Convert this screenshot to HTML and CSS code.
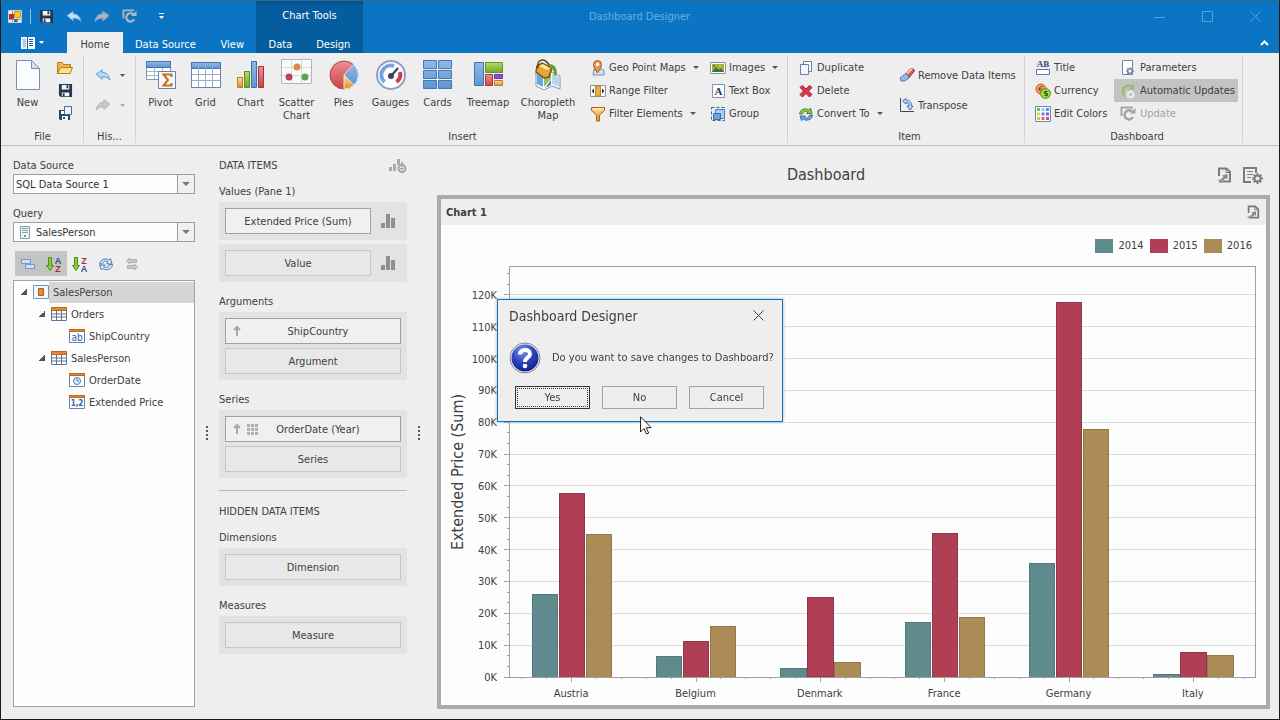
FILE: index.html
```html
<!DOCTYPE html>
<html lang="en">
<head>
<meta charset="utf-8">
<title>Dashboard Designer</title>
<link rel="stylesheet" href="styles.css">
</head>
<body>
<svg class="defs" aria-hidden="true">
  <defs>
    <linearGradient id="gBlue" x1="0" y1="0" x2="0" y2="1"><stop offset="0" stop-color="#8fb9e6"/><stop offset="1" stop-color="#5f95d2"/></linearGradient>
    <linearGradient id="gRed" x1="0" y1="0" x2="0" y2="1"><stop offset="0" stop-color="#ee9090"/><stop offset="1" stop-color="#c8444b"/></linearGradient>
    <linearGradient id="gGreen" x1="0" y1="0" x2="0" y2="1"><stop offset="0" stop-color="#b5dc62"/><stop offset="1" stop-color="#6fa52a"/></linearGradient>
    <linearGradient id="gGold" x1="0" y1="0" x2="0" y2="1"><stop offset="0" stop-color="#ffe09a"/><stop offset="1" stop-color="#d98f26"/></linearGradient>
    <radialGradient id="gBall" cx=".4" cy=".25" r=".8"><stop offset="0" stop-color="#7f95f0"/><stop offset=".5" stop-color="#2c45c4"/><stop offset="1" stop-color="#131f80"/></radialGradient>
    <symbol id="i-disk" viewBox="0 0 16 16"><path fill="#26364f" d="M1 1h14v14H3l-2-2z"/><path fill="#f4f7fb" d="M4 2h8v5H4zM4 10h8v4H4z"/><path fill="#26364f" d="M9 2.500h2v3H9zM5 11h2v3H5z"/></symbol>
    <symbol id="i-table" viewBox="0 0 16 14"><path fill="#fff" stroke="#5c7599" d="M.5.500h15v13H.5z"/><path fill="#e08a33" stroke="#b9681c" d="M.5.500h15v3H.5z"/><path stroke="#5c7599" fill="none" d="M1 7h14M1 10h14M5.500 4v9M10.500 4v9"/></symbol>
    <symbol id="i-field" viewBox="0 0 16 14"><path fill="#fff" stroke="#5c86b5" d="M.5.500h15v13H.5z"/><path fill="#e08a33" stroke="#b9681c" d="M.5.500h15v2H.5z"/></symbol>
    <symbol id="i-bars" viewBox="0 0 16 16"><path fill="#8f8f8f" d="M1 10h4v5H1zM6 1h4v14H6zM11 5h4v10h-4z"/></symbol>
    <symbol id="i-export" viewBox="0 0 16 16"><path fill="none" stroke="#7c7c7c" stroke-width="2" d="M3 9V1.500h7.500L14 5v9.500H3"/><path fill="none" stroke="#7c7c7c" d="M10 1v4.500h4"/><path fill="#8b8b8b" d="M0 13c4 0 6-1 7.500-3L6 8.500 11.500 7v5.500L10 11c-2 2.500-5 3-10 2z"/></symbol>
    <symbol id="i-gear" viewBox="0 0 12 12"><circle cx="6" cy="6" r="3.300" fill="none" stroke="currentColor" stroke-width="2"/><path stroke="currentColor" stroke-width="2" d="M6 0v2.500M6 9.500V12M0 6h2.500M9.500 6H12M1.800 1.800l1.700 1.700M8.500 8.500l1.700 1.700M1.800 10.200l1.700-1.700M8.500 3.500l1.700-1.700"/></symbol>
    <symbol id="i-undo" viewBox="0 0 18 14"><path fill="currentColor" stroke="var(--edge)" d="M1 6l7-5v3c5 0 8 3 9 9-2-3-5-4-9-4v3z"/></symbol>
    <symbol id="i-refresh" viewBox="0 0 16 16"><path fill="none" stroke="currentColor" stroke-width="2" d="M1.500 10V1.500H13"/><path fill="none" stroke="currentColor" stroke-width="2.500" d="M12.500 6A4.500 4.500 0 1 0 13 11"/><path fill="currentColor" d="M9.500 7.500h6V2z"/></symbol>
  </defs>
</svg>

<header class="header">
  <div class="header-left">
    <div class="quick">
      <svg width="14" height="13" viewBox="0 0 14 13"><path fill="#f3f3ee" stroke="#c9cdd6" d="M.5.500h13v12H.5z"/><path stroke="#8897b4" d="M1 9.500h12M4.500 1v11M9.500 1v11"/><path fill="#c4242c" d="M1 4h5v5H1z"/><path fill="#f7c832" stroke="#cf9718" d="M6.500 1.500h6v6h-6z"/><path fill="#2d5fc0" d="M6 9h3v3H6z"/></svg>
      <span class="quick-sep"></span>
      <button aria-label="Save"><svg width="15" height="15"><use href="#i-disk"/></svg></button>
      <button aria-label="Undo" class="undo-light"><svg width="16" height="13"><use href="#i-undo"/></svg></button>
      <button aria-label="Redo" class="redo-gray"><svg class="flip" width="16" height="13"><use href="#i-undo"/></svg></button>
      <button aria-label="Refresh" class="refresh-gray"><svg width="15" height="15"><use href="#i-refresh"/></svg></button>
      <button aria-label="Customize toolbar" class="quick-more"><svg width="7" height="7" viewBox="0 0 7 7"><path fill="#fff" d="M1 0h5v1H1zM1 3h5L3.500 6z"/></svg></button>
    </div>
    <nav class="tabs">
      <button class="app-btn" aria-label="File menu"><svg width="14" height="12" viewBox="0 0 14 12"><path fill="#fff" d="M0 0h14v12H0z"/><path fill="#1470bd" d="M1.500 1.500H5v9H1.500z" opacity=".35"/><path stroke="#145a96" d="M6.500 0v12M8 2.500h4M8 4.500h4M8 6.500h4M8 8.500h4"/></svg><svg width="5" height="3" viewBox="0 0 5 3"><path fill="#fff" d="M0 0h5L2.500 3z"/></svg></button>
      <button class="tab tab-active">Home</button>
      <button class="tab">Data Source</button>
      <button class="tab">View</button>
    </nav>
  </div>
  <div class="context">
    <span class="context-title">Chart Tools</span>
    <div class="context-tabs"><button class="tab">Data</button><button class="tab">Design</button></div>
  </div>
  <div class="header-right">
    <div class="title-row">
      <span class="app-title">Dashboard Designer</span>
      <div class="window-btns">
        <button aria-label="Minimize"><svg width="11" height="11" viewBox="0 0 11 11"><path stroke="#3fa9e8" d="M0 6.500h11"/></svg></button>
        <button aria-label="Maximize"><svg width="11" height="11" viewBox="0 0 11 11"><path fill="none" stroke="#3fa9e8" d="M.5.500h10v10H.5z"/></svg></button>
        <button aria-label="Close"><svg width="11" height="11" viewBox="0 0 11 11"><path stroke="#3fa9e8" d="M.5.500l10 10M10.500.500l-10 10"/></svg></button>
      </div>
    </div>
    <button class="collapse" aria-label="Collapse ribbon"><svg width="9" height="6" viewBox="0 0 9 6"><path fill="none" stroke="#fff" stroke-width="2" d="M1 5l3.500-3.500L8 5"/></svg></button>
  </div>
</header>

<section class="ribbon">
  <div class="group group-file">
    <div class="group-body">
      <button class="big"><svg width="32" height="32" viewBox="0 0 32 32"><path fill="#fcfdff" stroke="#7d8db0" d="M4.500 1.500h15l8 8v21h-23z"/><path fill="#d9e2f2" stroke="#7d8db0" d="M19.500 1.500v8h8z"/></svg><span>New</span></button>
      <div class="icon-col">
        <button aria-label="Open"><svg width="16" height="14" viewBox="0 0 16 14"><path fill="#f0b84c" stroke="#b9791f" d="M.5 12.500v-11h5l1 2h7v3"/><path fill="#ffdf94" stroke="#b9791f" d="M.5 12.500l3-6h12l-2.500 6z"/></svg></button>
        <button aria-label="Save"><svg width="15" height="15"><use href="#i-disk"/></svg></button>
        <button aria-label="Save as"><svg width="15" height="15" viewBox="0 0 15 15"><path fill="#26486d" d="M1 4h11v10H2l-1-1z"/><path fill="#fff" d="M3 5h4v3H3zM4 10h6v4H4z"/><path fill="#26486d" d="M5 11h2v2H5z"/><path fill="#eef3fb" stroke="#4d6790" d="M6.500.500h7v8h-7z"/></svg></button>
      </div>
    </div>
    <span class="caption">File</span>
  </div>
  <div class="group group-history">
    <div class="group-body">
      <button class="split undo-blue" aria-label="Undo"><svg width="16" height="12"><use href="#i-undo"/></svg><svg width="5" height="3" viewBox="0 0 5 3"><path fill="#555" d="M0 0h5L2.500 3z"/></svg></button>
      <button class="split redo-off" aria-label="Redo" disabled><svg class="flip" width="16" height="12"><use href="#i-undo"/></svg><svg width="5" height="3" viewBox="0 0 5 3"><path fill="#aaa" d="M0 0h5L2.500 3z"/></svg></button>
    </div>
    <span class="caption">His...</span>
  </div>
  <div class="group group-insert">
    <div class="group-body">
      <button class="big big-narrow"><svg width="32" height="32" viewBox="0 0 32 32"><path fill="#fff" stroke="#8294bc" d="M1.500 2.500h24v18h-24z"/><path fill="url(#gBlue)" stroke="#3f74b5" d="M1.500 2.500h24v6h-24z"/><path fill="none" stroke="#a9b7d3" d="M2 12.500h23M2 16.500h23M9.500 9v11M17.500 9v11"/><path fill="#f7f9fe" stroke="#6c7fad" d="M13.500 12.500h17v17h-17z"/><path fill="none" stroke="#c8701c" stroke-width="2" d="M26.500 18v-2.500h-8l4.500 5.500-4.500 5.500h8V24"/></svg><span>Pivot</span></button>
      <button class="big big-narrow"><svg width="32" height="32" viewBox="0 0 32 32"><path fill="#fff" stroke="#6f83b3" d="M1.500 3.500h29v25h-29z"/><path fill="url(#gBlue)" stroke="#3f74b5" d="M1.500 3.500h29v6h-29z"/><path fill="none" stroke="#9aaad0" d="M2 15.500h28M2 21.500h28M8.500 4v24M15.500 4v24M22.500 4v24"/></svg><span>Grid</span></button>
      <button class="big big-narrow"><svg width="32" height="32" viewBox="0 0 32 32"><path fill="url(#gGold)" stroke="#b87b25" d="M2.500 18.500h5v10h-5z"/><path fill="url(#gGreen)" stroke="#5c8c22" d="M9.500 12.500h5v16h-5z"/><path fill="url(#gBlue)" stroke="#3d6fae" d="M16.500 2.500h5v26h-5z"/><path fill="url(#gRed)" stroke="#a8303a" d="M23.500 7.500h5v21h-5z"/></svg><span>Chart</span></button>
      <button class="big"><svg width="32" height="32" viewBox="0 0 32 32"><path fill="#fafafa" stroke="#b4b4b4" d="M.5.500h30v24H.5z"/><path stroke="#dadada" d="M1 8.500h29M1 16.500h29M10.500 1v23M20.500 1v23"/><circle cx="16" cy="8" r="3.500" fill="#d98b47"/><circle cx="8" cy="18" r="3.500" fill="#c23f5b"/><circle cx="24" cy="18" r="3.500" fill="#62a052"/></svg><span>Scatter<br>Chart</span></button>
      <button class="big"><svg width="32" height="32" viewBox="0 0 32 32"><circle cx="16" cy="16" r="14" fill="url(#gRed)" stroke="#a54650"/><path fill="url(#gBlue)" stroke="#dce8f5" d="M16 16l9.500-10.500A14 14 0 0 1 26 26z"/><path fill="url(#gGold)" stroke="#f4e2bd" d="M16 16l10 10a14 14 0 0 1-10 4z"/></svg><span>Pies</span></button>
      <button class="big"><svg width="32" height="32" viewBox="0 0 32 32"><circle cx="16" cy="16" r="14" fill="#fdfdff" stroke="#8f9cc4" stroke-width="2"/><path fill="none" stroke="#75a5dc" stroke-width="4" d="M9.500 23A9.500 9.500 0 0 1 19 7"/><path fill="none" stroke="#c9404a" stroke-width="4" d="M25 13a9.500 9.500 0 0 1-3.500 10"/><path stroke="#3a4558" stroke-width="2" d="M16 17l7-8"/><circle cx="16" cy="17" r="3" fill="#3a4558"/></svg><span>Gauges</span></button>
      <button class="big"><svg width="32" height="32" viewBox="0 0 32 32"><path fill="url(#gBlue)" stroke="#4777b3" d="M1.500 1.500h13v8h-13zM16.500 1.500h13v8h-13zM1.500 11.500h13v8h-13zM16.500 11.500h13v8h-13zM1.500 21.500h13v8h-13zM16.500 21.500h13v8h-13z"/></svg><span>Cards</span></button>
      <button class="big big-wide"><svg width="32" height="32" viewBox="0 0 32 32"><path fill="url(#gBlue)" stroke="#4472ad" d="M2.500 3.500h9v23h-9z"/><path fill="url(#gGreen)" stroke="#639530" d="M13.500 3.500h17v10h-17z"/><path fill="url(#gRed)" stroke="#a83a3a" d="M13.500 15.500h7v11h-7z"/><path fill="#8e50d0" stroke="#7038ad" d="M22.500 15.500h8v4h-8z"/><path fill="url(#gGold)" stroke="#b87a2a" d="M22.500 21.500h8v5h-8z"/></svg><span>Treemap</span></button>
      <button class="big big-xwide"><svg width="32" height="32" viewBox="0 0 32 32"><path fill="#fff" stroke="#8894a8" d="M4 13l7 4 8-4 9 4v13l-8-3-8 4-8-4z"/><path fill="#6aa8dc" d="M5 14l6 4v10l-6-3z"/><path fill="#8fc25c" d="M12 18l7-4v6l-7 8z"/><path fill="#4f84c7" d="M13 29l6-8v5z"/><path fill="#b9d7ef" d="M20 15l7 3v10l-7-3z"/><path fill="#e6a53c" stroke="#7e5117" stroke-width="1.500" d="M5 7l5-3 10 5-3 9-5 1-8-6z"/><path fill="#ffe09a" d="M7 7l4-2 7 4-3 2z"/><path fill="none" stroke="#5a4325" stroke-width="1.500" d="M6 9C5 2 8 1 11 1s6 4 9 9"/><path fill="#63a22c" d="M17 5c6 0 8 4 8 11l-3 1c0-6-1-7-4-8z"/></svg><span>Choropleth<br>Map</span></button>
      <div class="small-col small-col-a">
        <button class="small"><svg width="16" height="16" viewBox="0 0 16 16"><path fill="#cfe0f4" stroke="#7393c0" d="M4 9l3 2 4-2 3 1v5H3z"/><path fill="#e9964a" stroke="#a45b1b" d="M7.500 13C5 9 3.500 7.500 3.500 4.500a4 4 0 0 1 8 0c0 3-1.500 4.500-4 8.500z"/><circle cx="7.500" cy="4.500" r="1.800" fill="#fff"/></svg>Geo Point Maps<i class="caret"></i></button>
        <button class="small"><svg width="16" height="16" viewBox="0 0 16 16"><path fill="#fff" stroke="#8a93a3" d="M.5 2.500h15v11H.5z"/><path fill="#e2b14d" stroke="#b68528" d="M5.500 3v10h5V3z"/><path fill="#333" d="M4 5.500v5L1.500 8zM12 5.500v5L14.500 8z"/></svg>Range Filter</button>
        <button class="small"><svg width="16" height="16" viewBox="0 0 16 16"><path fill="url(#gGold)" stroke="#a4661d" d="M1.500 1.500h13v3L9.500 9v6h-3V9l-5-4.500z"/><path fill="#fff3cf" d="M3 2.500h10v1H3z"/></svg>Filter Elements<i class="caret"></i></button>
      </div>
      <div class="small-col small-col-b">
        <button class="small"><svg width="16" height="16" viewBox="0 0 16 16"><path fill="#fff" stroke="#8a93a3" d="M.5 2.500h15v11H.5z"/><path fill="#8dbb3e" d="M2 4h12v8H2z"/><path fill="#3f7430" d="M2 12l4-5 3 3 2-2 3 4z"/><circle cx="10" cy="6" r="1.800" fill="#f2a32f"/><path fill="#c94536" d="M3 5h2v2H3z"/></svg>Images<i class="caret"></i></button>
        <button class="small"><svg width="16" height="16" viewBox="0 0 16 16"><path fill="#fff" stroke="#8090b0" d="M2.500 1.500h12v13h-12z"/><text x="8.500" y="12" class="serif-a" text-anchor="middle">A</text></svg>Text Box</button>
        <button class="small"><svg width="16" height="16" viewBox="0 0 16 16"><path fill="none" stroke="#3c5f8f" stroke-dasharray="3 2" d="M1.500 1.500h13v13h-13z"/><path fill="#a9cdf0" stroke="#4b82bf" d="M5.500 3.500h9v9h-9z"/><path fill="#6aa4dc" stroke="#3d72ae" d="M3.500 7.500h7v6h-7z"/></svg>Group</button>
      </div>
    </div>
    <span class="caption">Insert</span>
  </div>
  <div class="group group-item">
    <div class="group-body">
      <div class="small-col small-col-c">
        <button class="small"><svg width="16" height="16" viewBox="0 0 16 16"><path fill="#fff" stroke="#6a7ea8" d="M5.500 1.500h8v10h-8z"/><path fill="#f4f7fd" stroke="#6a7ea8" d="M2.500 4.500h8v10h-8z"/></svg>Duplicate</button>
        <button class="small"><svg width="16" height="16" viewBox="0 0 16 16"><path fill="#d33a4b" stroke="#a32332" d="M4.500 2.500L8 6l3.500-3.500 2.500 2L10.500 8l3.500 3.500-2.500 2.500L8 10.500 4.500 14 2 11.500 5.500 8 2 4.500z"/></svg>Delete</button>
        <button class="small"><svg width="16" height="16" viewBox="0 0 16 16"><path fill="#8dc350" stroke="#548a25" d="M1.500 8C2 3 8 1.500 10.500 4L12.500 2l1.500 5.500H8.500L10 6C8 4.500 5 5.500 4.500 8z"/><path fill="#77a9dc" stroke="#376fae" d="M14.500 9c-.5 5-6.500 6.500-9 4l-2 1.500L2 10h5.500L6 11.500C8 13 11 12 11.500 9z"/></svg>Convert To<i class="caret"></i></button>
      </div>
      <div class="small-col small-col-two">
        <button class="small"><svg width="16" height="16" viewBox="0 0 16 16"><path fill="#d9585a" stroke="#a53b40" d="M6.500 6.500L11 2h3.500l1 2-6 7.500z"/><path fill="#f7c9c4" d="M7 6l4-4h3L9 7z"/><path fill="#8fbbe9" stroke="#547fb8" d="M1 11l5.500-4.500 3 2.500v2.500L5.500 14H2z"/></svg>Remove Data Items</button>
        <button class="small"><svg width="16" height="16" viewBox="0 0 16 16"><path fill="none" stroke="#3b4960" d="M1.500 1v13.500H15"/><path fill="#b5d5f2" stroke="#4a76a8" d="M3.500 4L7 1.500V3c4 0 5.500 2.500 5.500 6H14l-3 4-3-4h2c0-2.500-1-3.500-3-3.500V7z"/></svg>Transpose</button>
      </div>
    </div>
    <span class="caption">Item</span>
  </div>
  <div class="group group-dash">
    <div class="group-body">
      <div class="small-col small-col-d">
        <button class="small"><svg width="16" height="16" viewBox="0 0 16 16"><text x="8" y="7" class="serif-ab" text-anchor="middle">AB</text><path fill="#fff" stroke="#6378a8" d="M1.500 9.500h13v5h-13z"/></svg>Title</button>
        <button class="small"><svg width="16" height="16" viewBox="0 0 16 16"><circle cx="6" cy="6" r="5" fill="#f2a266" stroke="#c35b24"/><path fill="none" stroke="#8c3c12" d="M8 4a2.500 2.500 0 1 0 0 4M3.500 6H7"/><circle cx="10.500" cy="10.500" r="5" fill="#a5d839" stroke="#5b9420"/><path fill="none" stroke="#34641a" d="M12.500 8.500h-3v2h3v2h-3M10.900 7.500v6"/></svg>Currency</button>
        <button class="small"><svg width="16" height="16" viewBox="0 0 16 16"><path fill="#fff" stroke="#7184aa" d="M.5.500h15v15H.5z"/><path fill="#6fc344" d="M2 2h3v3H2z"/><path fill="#8bd0e8" d="M6.500 2h3v3h-3z"/><path fill="#4c92dd" d="M11 2h3v3h-3z"/><path fill="#c4da4b" d="M2 6.500h3v3H2z"/><path fill="#8f6fd6" d="M6.500 6.500h3v3h-3z"/><path fill="#5870d0" d="M11 6.500h3v3h-3z"/><path fill="#f0b544" d="M2 11h3v3H2z"/><path fill="#e3674a" d="M6.500 11h3v3h-3z"/><path fill="#c9509a" d="M11 11h3v3h-3z"/></svg>Edit Colors</button>
      </div>
      <div class="small-col small-col-e">
        <button class="small"><svg width="16" height="16" viewBox="0 0 16 16"><path fill="#fff" stroke="#7283ae" d="M2.500.500h10v14h-10z"/><svg class="gear-blue" x="6" y="7" width="8" height="8"><use href="#i-gear"/></svg></svg>Parameters</button>
        <button class="small small-on" aria-pressed="true"><svg width="16" height="16" viewBox="0 0 16 16"><path fill="none" stroke="#9cba70" stroke-width="2.500" d="M5 13A5.500 5.500 0 1 1 12 4"/><path fill="#9cba70" d="M8 6.500h6v-6z"/><svg class="gear-light" x="6" y="7" width="9" height="9"><use href="#i-gear"/></svg></svg>Automatic Updates</button>
        <button class="small refresh-off" disabled><svg width="16" height="16"><use href="#i-refresh"/></svg>Update</button>
      </div>
    </div>
    <span class="caption">Dashboard</span>
  </div>
</section>

<main class="work">
  <aside class="source">
    <label for="ds">Data Source</label>
    <div class="combo"><select id="ds"><option>SQL Data Source 1</option></select></div>
    <label for="query" class="label-gap">Query</label>
    <div class="combo combo-icon">
      <svg width="10" height="13" viewBox="0 0 10 13"><path fill="#eef7f0" stroke="#7d9ab0" d="M.5.500h9v12h-9z"/><path stroke="#7ba3c4" d="M2 2.500h6M2 4.500h6M2 6.500h6"/><path fill="#63ac4f" d="M4 9h2v2H4z"/></svg>
      <select id="query"><option>SalesPerson</option></select>
    </div>
    <div class="toolbar">
      <button class="on" aria-label="Group by type"><svg width="16" height="16" viewBox="0 0 16 16"><path fill="#c9e0f6" stroke="#6c9ac8" d="M1.500 3.500h9v4h-9zM5.500 8.500h9v4h-9z"/></svg></button>
      <button class="on" aria-label="Sort ascending"><svg width="16" height="16" viewBox="0 0 16 16"><path fill="#8ecb3c" stroke="#4f8a1c" d="M2.500 1.500h3v8h2L4 14.500.5 9.500h2z"/><text x="12" y="8" class="sort-blue" text-anchor="middle">A</text><text x="12" y="16" class="sort-red" text-anchor="middle">Z</text></svg></button>
      <button aria-label="Sort descending"><svg width="16" height="16" viewBox="0 0 16 16"><path fill="#8ecb3c" stroke="#4f8a1c" d="M2.500 1.500h3v8h2L4 14.500.5 9.500h2z"/><text x="12" y="8" class="sort-red" text-anchor="middle">Z</text><text x="12" y="16" class="sort-blue" text-anchor="middle">A</text></svg></button>
      <button aria-label="Refresh fields"><svg width="16" height="16" viewBox="0 0 16 16"><path fill="#cfe4f8" stroke="#4f80b5" d="M1.500 8C2 3.500 8 1.500 11 4l1.500-1.500L14 8H8.500L10 6C7 4 5 5.500 4.500 8z"/><path fill="#cfe4f8" stroke="#4f80b5" d="M14.500 8.500c0 4.500-6 6.500-9.500 4L3.500 14 1.500 9H7l-1.500 1.500C8.500 12 11 11 11.500 8.500z"/></svg></button>
      <button aria-label="Swap" disabled><svg width="16" height="16" viewBox="0 0 16 16"><path fill="#c8c8c8" stroke="#b0b0b0" d="M2.500 5l3-3v1.500h7v3h-7V8zM13.500 11l-3 3v-1.500h-7v-3h7V8z"/></svg></button>
    </div>
    <ul class="tree">
      <li class="lvl1"><i class="twist"></i><svg width="16" height="14" viewBox="0 0 16 14"><path fill="#f3f8fe" stroke="#7095bd" d="M.5.500h15v13H.5z"/><path fill="#e58c3a" stroke="#b35f18" d="M5.500 3.500h5v7h-5z"/></svg><span class="node selected">SalesPerson</span></li>
      <li class="lvl2"><i class="twist"></i><svg width="16" height="14"><use href="#i-table"/></svg><span class="node">Orders</span></li>
      <li class="lvl3"><svg width="16" height="14" viewBox="0 0 16 14"><use href="#i-field"/><text x="8" y="12" class="field-text" text-anchor="middle">ab</text></svg><span class="node">ShipCountry</span></li>
      <li class="lvl2"><i class="twist"></i><svg width="16" height="14"><use href="#i-table"/></svg><span class="node">SalesPerson</span></li>
      <li class="lvl3"><svg width="16" height="14" viewBox="0 0 16 14"><use href="#i-field"/><circle cx="8" cy="8" r="3.500" fill="#eaf3fd" stroke="#3c76b5"/><path fill="none" stroke="#3c76b5" d="M8 5.500V8h2"/></svg><span class="node">OrderDate</span></li>
      <li class="lvl3"><svg width="16" height="14" viewBox="0 0 16 14"><use href="#i-field"/><text x="8" y="11" class="field-num" text-anchor="middle">1,2</text></svg><span class="node">Extended Price</span></li>
    </ul>
  </aside>

  <div class="splitter"><i></i><i></i><i></i><i></i></div>

  <section class="items">
    <div class="items-head"><span>DATA ITEMS</span><svg width="18" height="16" viewBox="0 0 18 16"><path fill="#ababab" d="M0 9h3v4H0zM4 6h3v7H4zM8 1h3v6H8zM12 4h2v3h-2z"/><circle cx="13" cy="10.500" r="3.500" fill="#eee" stroke="#a3a3a3" stroke-width="2"/><path stroke="#a3a3a3" d="M13 8.500v4M11 10.500h4"/></svg></div>
    <h3>Values (Pane 1)</h3>
    <div class="bucket"><button class="item item-set">Extended Price (Sum)</button><button class="opt" aria-label="Series type"><svg width="16" height="16"><use href="#i-bars"/></svg></button></div>
    <div class="bucket bucket-next"><button class="item">Value</button><button class="opt" aria-label="Series type"><svg width="16" height="16"><use href="#i-bars"/></svg></button></div>
    <h3>Arguments</h3>
    <div class="bucket bucket-col">
      <button class="item item-set"><svg width="36" height="12" viewBox="0 0 36 12"><path fill="none" stroke="#a8a8a8" stroke-width="2" d="M5 11V2M2 5l3-3 3 3"/></svg><span>ShipCountry</span></button>
      <button class="item">Argument</button>
    </div>
    <h3>Series</h3>
    <div class="bucket bucket-col">
      <button class="item item-set"><svg width="36" height="12" viewBox="0 0 36 12"><path fill="none" stroke="#a8a8a8" stroke-width="2" d="M5 11V2M2 5l3-3 3 3"/><path fill="#b0b0b0" d="M15 1h3v3h-3zM19 1h3v3h-3zM23 1h3v3h-3zM15 5h3v3h-3zM19 5h3v3h-3zM23 5h3v3h-3zM15 9h3v3h-3zM19 9h3v3h-3zM23 9h3v3h-3z"/></svg><span>OrderDate (Year)</span></button>
      <button class="item">Series</button>
    </div>
    <div class="items-head hidden-head"><span>HIDDEN DATA ITEMS</span></div>
    <h3>Dimensions</h3>
    <div class="bucket bucket-col"><button class="item">Dimension</button></div>
    <h3>Measures</h3>
    <div class="bucket bucket-col"><button class="item">Measure</button></div>
  </section>

  <div class="splitter"><i></i><i></i><i></i><i></i></div>

  <section class="board">
    <div class="board-head">
      <h1>Dashboard</h1>
      <button aria-label="Export dashboard"><svg width="16" height="16"><use href="#i-export"/></svg></button>
      <button aria-label="Parameters"><svg width="21" height="17" viewBox="0 0 21 17"><path fill="none" stroke="#7c7c7c" stroke-width="2" d="M8 15H1V1h12v5"/><path stroke="#7c7c7c" d="M4 4.500h6M4 7.500h6M4 10.500h4"/><svg class="gear-gray" x="9" y="6" width="11" height="11"><use href="#i-gear"/></svg></svg></button>
    </div>
    <div class="card">
      <div class="card-head"><h2>Chart 1</h2><button aria-label="Export chart"><svg width="14" height="14"><use href="#i-export"/></svg></button></div>
      <div class="card-body">
        <div class="legend"><span><i class="c2014"></i>2014</span><span><i class="c2015"></i>2015</span><span><i class="c2016"></i>2016</span></div>
        <div class="chart">
          <div class="axis-title">Extended Price (Sum)</div>
          <div class="plot"><svg id="plot" width="100%" height="100%" role="img" aria-label="Extended price by country and year"></svg></div>
        </div>
      </div>
    </div>
  </section>
</main>

<dialog class="dialog" open aria-labelledby="dlg-title">
  <div class="dialog-head"><span id="dlg-title">Dashboard Designer</span><button aria-label="Close dialog"><svg width="11" height="11" viewBox="0 0 11 11"><path stroke="#444" d="M.5.500l10 10M10.500.500l-10 10"/></svg></button></div>
  <div class="dialog-msg">
    <svg width="32" height="32" viewBox="0 0 32 32"><circle cx="16" cy="16" r="15" fill="#eef1fb" stroke="#7a8196"/><circle cx="16" cy="16" r="13.500" fill="url(#gBall)"/><path fill="none" stroke="#fff" stroke-width="4" d="M11 12.500c0-6 10-6 10-.5 0 3.500-5 3.500-5 8"/><circle cx="16" cy="24" r="2.300" fill="#fff"/></svg>
    <p>Do you want to save changes to Dashboard?</p>
  </div>
  <div class="dialog-btns"><button class="default">Yes</button><button>No</button><button>Cancel</button></div>
</dialog>
<svg class="cursor" width="12" height="19" viewBox="0 0 12 19" aria-hidden="true"><path fill="#fff" stroke="#222" d="M.5.800v15.200l3.500-3.500 2.500 5.500 2.200-1-2.500-5.300h5z"/></svg>
<script src="chart.js"></script>
</body>
</html>
```

FILE: styles.css
```css
* { box-sizing: border-box; }

body {
  margin: 0;
  min-height: 100vh;
  display: flex;
  flex-direction: column;
  background: #eee;
  border: 1px solid #1b1b1b;
  border-top-color: #2b6a93;
  color: #404040;
  font-family: "DejaVu Sans Condensed", Tahoma, "Noto Sans", sans-serif;
  font-size: 11px;
  line-height: 13px;
}

button {
  margin: 0;
  padding: 0;
  border: 0;
  background: none;
  color: inherit;
  font: inherit;
}

svg { display: block; flex: none; overflow: visible; }
h1, h2, h3, p, ul { margin: 0; padding: 0; font-size: 11px; font-weight: normal; }
.defs { position: absolute; width: 0; height: 0; }
.flip { transform: scaleX(-1); }

/* Title bar */
.header { display: flex; height: 52px; background: #0b75c3; color: #fff; }
.header-left { width: 255px; display: flex; flex-direction: column; }
.quick { flex: 1; display: flex; align-items: center; padding-left: 7px; gap: 12px; }
.quick-sep { width: 1px; height: 15px; background: #8fc0e4; margin-right: -4px; margin-left: -4px; }
.quick-more { margin-left: 9px; }
.undo-light { color: #c3e0f7; --edge: #5c9fd4; }
.redo-gray { color: #a9b6c0; --edge: #8fa0ad; }
.refresh-gray { color: #a9b6c0; }
.tabs { display: flex; height: 21px; }
.app-btn { flex: none; width: 66px; display: flex; align-items: center; gap: 4px; padding-left: 20px; }
.tab { flex: none; height: 21px; padding: 3px 12px 0; white-space: nowrap; }
.tab-active { width: 56px; padding: 3px 0 0; background: #eee; color: #404040; }
.header-left .tab:last-child { margin-left: auto; }
.context {
  width: 107px;
  display: flex;
  flex-direction: column;
  align-items: center;
  background: linear-gradient(#07508a, #065d9e 6px);
}
.context-title { flex: 1; padding-top: 8px; }
.context-tabs { display: flex; }
.header-right { flex: 1; display: flex; flex-direction: column; align-items: flex-end; }
.title-row { flex: 1; align-self: stretch; display: flex; align-items: center; justify-content: space-between; padding-left: 226px; color: #62b1ea; }
.window-btns { display: flex; gap: 37px; padding-right: 18px; }
.collapse { height: 21px; padding-right: 10px; }

/* Ribbon */
.ribbon { display: flex; height: 93px; padding-top: 3px; border-bottom: 1px solid #bdbdbd; }
.group { display: flex; flex-direction: column; height: 87px; border-right: 1px solid #d2d2d2; }
.group-body { flex: 1; display: flex; }
.caption { align-self: center; }
.group-file { width: 83px; padding-left: 1px; }
.group-history { width: 52px; }
.group-insert { width: 652px; padding-left: 2px; }
.group-item { width: 237px; padding-left: 7px; }
.group-dash { width: 218px; padding-left: 7px; }
.big { min-width: 47px; padding-top: 3px; display: flex; flex-direction: column; align-items: center; gap: 5px; }
.big-narrow { min-width: 45px; }
.big-wide { min-width: 54px; }
.big-xwide { min-width: 66px; }
.group-file .big { min-width: 51px; }
.icon-col { display: flex; flex-direction: column; }
.icon-col button { width: 24px; height: 23px; display: grid; place-items: center; }
.group-history .group-body { flex-direction: column; padding-top: 4px; }
.split { height: 30px; display: flex; align-items: center; gap: 9px; padding-left: 11px; }
.undo-blue { color: #b9dcf5; --edge: #4f8fc4; }
.redo-off { color: #c9c9c9; --edge: #a5a5a5; }
.small-col { display: flex; flex-direction: column; }
.small-col-a { width: 120px; margin-left: 6px; }
.small-col-b { width: 80px; }
.small-col-c { width: 101px; }
.small-col-d { width: 82px; }
.small-col-e { width: 124px; }
.small { display: flex; align-items: center; gap: 3px; height: 23px; padding: 0 3px; white-space: nowrap; }
.small-col-two { padding-top: 4px; width: 128px; }
.small-col-two .small { height: 30px; }
.small-col-e .small { padding-left: 6px; gap: 4px; }
.small-on { background: #c3c3c3; }
.refresh-off { color: #a3a3a3; }
.caret { margin-left: 4px; border: solid transparent; border-width: 3px 3px 0; border-top-color: #555; }
.serif-a { font: bold 11px "Liberation Serif", serif; fill: #26364f; }
.serif-ab { font: bold 9px "Liberation Serif", serif; fill: #3b4a80; }
.gear-blue { color: #7186ab; }
.gear-light { color: #e8eff8; }
.gear-gray { color: #7c7c7c; }

/* Field list */
.work { flex: 1; display: flex; }
.source { width: 194px; padding: 12px 0 12px 12px; display: flex; flex-direction: column; }
.source label { line-height: 16px; }
.combo { display: flex; align-items: center; position: relative; height: 20px; border: 1px solid #9e9e9e; background: #fdfdfd; }
.source .label-gap { margin-top: 12px; }
.combo select { flex: 1; width: 100%; height: 18px; padding: 0 20px 0 2px; border: 0; background: none; appearance: none; color: #333; font: inherit; }
.combo::before { content: ""; position: absolute; right: 0; top: 0; width: 16px; height: 18px; border-left: 1px solid #9e9e9e; background: #f0f0f0; }
.combo::after { content: ""; position: absolute; right: 4px; top: 7px; border: solid transparent; border-width: 4px 4px 0; border-top-color: #777; }
.combo-icon { padding-left: 6px; }
.combo-icon select { padding-left: 6px; }
.toolbar { display: flex; margin: 9px 0 4px 2px; }
.toolbar button { width: 26px; height: 25px; display: grid; place-items: center; }
.toolbar .on { background: #c4c4c4; }
.sort-blue, .sort-red { font: bold 9px "Liberation Sans", sans-serif; }
.sort-blue { fill: #35508f; }
.sort-red { fill: #a52b3c; }
.tree { flex: 1; list-style: none; border: 1px solid #a3a3a3; background: #fdfdfd; }
.tree li { display: flex; align-items: center; height: 22px; }
.lvl1 { padding-left: 7px; }
.lvl2 { padding-left: 25px; }
.lvl3 { padding-left: 55px; }
.twist { width: 6px; height: 6px; margin-right: 6px; background: linear-gradient(135deg, transparent 50%, #555 50%); }
.node { flex: 1; padding-left: 4px; line-height: 21px; }
.selected { background: #d6d6d6; }
.field-text { font: 10px "DejaVu Sans Condensed", sans-serif; fill: #2f66a6; }
.field-num { font: bold 8px "DejaVu Sans Condensed", sans-serif; fill: #2f66a6; }

/* Splitters */
.splitter { width: 23px; display: flex; flex-direction: column; align-items: center; justify-content: center; gap: 2px; }
.splitter i { width: 2px; height: 2px; background: #5a5a5a; }

/* Data items */
.items { width: 189px; padding: 12px 0 0 1px; }
.items-head { display: flex; justify-content: space-between; height: 16px; line-height: 16px; margin-bottom: 10px; }
.hidden-head { height: 30px; padding-top: 13px; margin: 12px 0 0; border-top: 1px solid #b9b9b9; }
.items h3 { line-height: 16px; margin: 12px 0 2px; }
.items-head + h3 { margin-top: 0; }
.items .hidden-head + h3 { margin-top: 10px; }
.bucket { display: flex; gap: 4px; padding: 6px; background: #e3e3e3; }
.bucket-next { margin-top: 4px; }
.bucket-col { flex-direction: column; }
.item { flex: 1; min-height: 26px; display: flex; align-items: center; justify-content: center; border: 1px solid #c6c6c6; background: #e8e8e8; }
.item span { flex: 1; padding-right: 32px; }
.item-set { border-color: #a0a0a0; background: #f0f0f0; }
.item-set svg { margin-left: 6px; }
.opt { width: 26px; display: grid; place-items: center; }

/* Dashboard surface */
.board { flex: 1; min-width: 0; display: flex; flex-direction: column; padding: 9px 9px 10px 7px; }
.board-head { display: flex; align-items: center; height: 40px; padding-right: 6px; gap: 11px; }
.board h1 { flex: 1; padding-left: 10px; text-align: center; font-size: 16px; line-height: 20px; }
.card { flex: 1; display: flex; flex-direction: column; border: 4px solid #ababab; background: #fdfdfd; }
.card-head { display: flex; align-items: center; justify-content: space-between; height: 26px; padding: 0 6px 0 5px; background: #eee; }
.card h2 { font-weight: bold; }
.card-body { flex: 1; display: flex; flex-direction: column; padding: 13px 11px 28px 8px; }
.legend { display: flex; justify-content: flex-end; gap: 6px; height: 15px; padding-right: 3px; }
.legend span { display: flex; align-items: center; gap: 5px; }
.legend i { width: 18px; height: 14px; }
.c2014 { background: #5f8b8f; fill: #5f8b8f; stroke: #4f7a7e; }
.c2015 { background: #b03f55; fill: #b03f55; stroke: #943549; }
.c2016 { background: #ab8b56; fill: #ab8b56; stroke: #94784a; }
.chart { flex: 1; display: flex; padding-top: 13px; }
.axis-title { width: 18px; margin-right: 42px; writing-mode: vertical-rl; transform: rotate(180deg); text-align: center; font-size: 16px; line-height: 18px; }
.plot { flex: 1; min-width: 0; display: flex; flex-direction: column; }
.plot svg { flex: 1; }
.grid-line { stroke: #dcdcdc; }
.axis-line { stroke: #a0a0a0; fill: none; }
.tick { fill: #a0a0a0; }
.plot text { fill: #404040; }

/* Message box */
.dialog {
  position: fixed;
  inset: 0;
  margin: auto;
  width: 286px;
  height: fit-content;
  padding: 7px 18px 12px 11px;
  border: 1px solid #1e6ea6;
  background: #eee;
  color: inherit;
  box-shadow: 0 0 3px #7fb4dc;
}
.dialog-head { display: flex; align-items: center; justify-content: space-between; font-size: 14px; line-height: 18px; }
.dialog-msg { display: flex; align-items: center; gap: 11px; margin: 17px 0 12px; white-space: nowrap; }
.dialog-btns { display: flex; justify-content: space-between; padding-left: 6px; }
.dialog-btns button { width: 75px; height: 23px; border: 1px solid #a3a3a3; }
.dialog-btns .default { border-color: #333; outline: 1px dotted #333; outline-offset: -3px; }
.cursor { position: fixed; left: 50%; top: calc(50% + 56px); }
```

FILE: chart.js
```js
const svg = document.getElementById('plot');
const MAX = 129.1;
const data = [
  ['Austria', 25.8, 57.5, 44.9],
  ['Belgium', 6.3, 11.3, 16],
  ['Denmark', 2.8, 25.1, 4.4],
  ['France', 17.2, 45.2, 18.8],
  ['Germany', 35.5, 117.5, 77.6],
  ['Italy', 0.9, 7.8, 6.9]
];

function add(name, attrs, text) {
  const el = document.createElementNS('http://www.w3.org/2000/svg', name);
  for (const key in attrs) el.setAttribute(key, attrs[key]);
  if (text) el.textContent = text;
  svg.appendChild(el);
}
const pct = n => n.toFixed(3) + '%';
const yOf = v => pct(100 - v / MAX * 100);
const crisp = { 'shape-rendering': 'crispEdges' };

for (let v = 0; v <= 120; v += 10) {
  const y = yOf(v);
  if (v) add('line', { x1: 0, x2: '100%', y1: y, y2: y, class: 'grid-line', ...crisp });
  add('line', { x1: -5, x2: 0, y1: y, y2: y, class: 'axis-line', ...crisp });
  add('text', { x: -12, y: y, dy: 4, 'text-anchor': 'end' }, v + 'K');
  for (const part of [1, 2]) {
    const minor = v + part * 10 / 3;
    if (minor < MAX) add('line', { x1: -2, x2: 0, y1: yOf(minor), y2: yOf(minor), class: 'axis-line', ...crisp });
  }
}

const slot = 100 / data.length;
data.forEach((row, i) => {
  const mid = (i + 0.5) * slot;
  for (let k = -2; k <= 2; k++) {
    add('rect', { x: pct(mid + k * slot / 5), y: '100%', width: 1, height: k ? 2 : 5, class: 'tick', ...crisp });
  }
  row.slice(1).forEach((value, s) => {
    add('rect', {
      x: pct(mid - 5.23 + s * 3.62), y: yOf(value),
      width: pct(3.38), height: pct(value / MAX * 100),
      class: 'c' + (2014 + s), ...crisp
    });
  });
  add('text', { x: pct(mid), y: '100%', dy: 20, 'text-anchor': 'middle' }, row[0]);
});
add('rect', { x: 0, y: 0, width: '100%', height: '100%', class: 'axis-line', ...crisp });
```
